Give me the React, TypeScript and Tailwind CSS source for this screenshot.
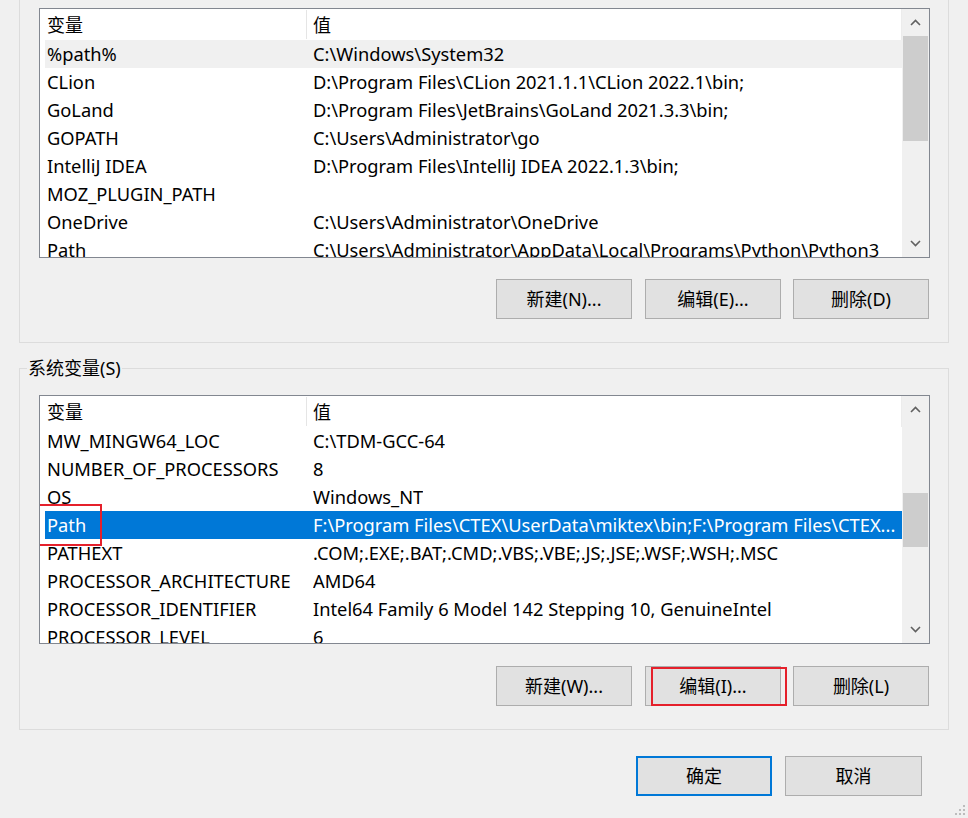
import type { ReactNode } from "react";

type Row = {
  name: string;
  value: string;
  hover?: boolean;
  selected?: boolean;
  mark?: boolean;
};

const userRows: Row[] = [
  { name: "%path%", value: "C:\\Windows\\System32", hover: true },
  { name: "CLion", value: "D:\\Program Files\\CLion 2021.1.1\\CLion 2022.1\\bin;" },
  { name: "GoLand", value: "D:\\Program Files\\JetBrains\\GoLand 2021.3.3\\bin;" },
  { name: "GOPATH", value: "C:\\Users\\Administrator\\go" },
  { name: "IntelliJ IDEA", value: "D:\\Program Files\\IntelliJ IDEA 2022.1.3\\bin;" },
  { name: "MOZ_PLUGIN_PATH", value: "" },
  { name: "OneDrive", value: "C:\\Users\\Administrator\\OneDrive" },
  {
    name: "Path",
    value: "C:\\Users\\Administrator\\AppData\\Local\\Programs\\Python\\Python3",
  },
];

const sysRows: Row[] = [
  { name: "MW_MINGW64_LOC", value: "C:\\TDM-GCC-64" },
  { name: "NUMBER_OF_PROCESSORS", value: "8" },
  { name: "OS", value: "Windows_NT" },
  {
    name: "Path",
    value: "F:\\Program Files\\CTEX\\UserData\\miktex\\bin;F:\\Program Files\\CTEX...",
    selected: true,
    mark: true,
  },
  { name: "PATHEXT", value: ".COM;.EXE;.BAT;.CMD;.VBS;.VBE;.JS;.JSE;.WSF;.WSH;.MSC" },
  { name: "PROCESSOR_ARCHITECTURE", value: "AMD64" },
  {
    name: "PROCESSOR_IDENTIFIER",
    value: "Intel64 Family 6 Model 142 Stepping 10, GenuineIntel",
  },
  { name: "PROCESSOR_LEVEL", value: "6" },
];

function Chevron({ up }: { up?: boolean }) {
  return (
    <svg width="11" height="7" viewBox="0 0 11 7" fill="none">
      <path
        d={up ? "M1 6 L5.5 1.5 L10 6" : "M1 1 L5.5 5.5 L10 1"}
        stroke="#606060"
        strokeWidth="1.6"
      />
    </svg>
  );
}

function VarList({
  rows,
  height,
  thumb,
}: {
  rows: Row[];
  height: string;
  thumb: string;
}) {
  return (
    <div className={`${height} flex overflow-hidden border border-[#828790] bg-white`}>
      <div className="min-w-0 flex-1 overflow-hidden">
        {/* header */}
        <div className="flex h-[31px] items-stretch border-r border-[#ececec]">
          <div className="flex w-[266px] items-center pl-[7px]">变量</div>
          <div className="my-[1px] w-px bg-[#e5e5e5]" />
          <div className="flex items-center pl-[6px]">值</div>
        </div>
        {rows.map((r) => (
          <div
            key={r.name}
            className={`relative ml-[5px] flex h-[28px] items-center pl-[2px] text-[18.3px] whitespace-nowrap ${
              r.selected ? "bg-[#0078d7] text-white" : r.hover ? "bg-[#f0f0f0]" : ""
            }`}
          >
            <div className="w-[266px] shrink-0">{r.name}</div>
            <div className="min-w-0 overflow-hidden">{r.value}</div>
            {r.mark && (
              <span className="absolute left-[-9px] top-[-7px] h-[42px] w-[66px] border-2 border-[#e5202b]" />
            )}
          </div>
        ))}
      </div>
      {/* scrollbar */}
      <div className="flex w-[27px] shrink-0 flex-col bg-[#f0f0f0]">
        <div className="flex h-[27px] shrink-0 items-center justify-center">
          <Chevron up />
        </div>
        <div className="flex-1 px-[1px]">
          <div className={`${thumb} bg-[#cdcdcd]`} />
        </div>
        <div className="flex h-[27px] shrink-0 items-center justify-center">
          <Chevron />
        </div>
      </div>
    </div>
  );
}

function Btn({
  children,
  className = "",
  mark,
}: {
  children: ReactNode;
  className?: string;
  mark?: boolean;
}) {
  return (
    <button
      className={`relative flex h-[40px] items-center justify-center bg-[#e1e1e1] text-black ${
        className || "w-[136px] border border-[#adadad]"
      }`}
    >
      {children}
      {mark && (
        <span className="absolute left-[5px] top-0 h-[39px] w-[136px] border-2 border-[#e5202b]" />
      )}
    </button>
  );
}

export default function App() {
  return (
    <div className="relative h-[818px] w-[968px] overflow-hidden bg-[#f0f0f0] font-['Noto_Sans','Noto_Sans_CJK_SC',sans-serif] text-[18px] leading-[24px] text-black">
      {/* 用户变量 (top cut off) */}
      <div className="ml-[19px] w-[930px] border-x border-b border-[#dcdcdc] pb-[23px] pl-[19px] pr-[18px] pt-[8px]">
        <VarList rows={userRows} height="h-[250px]" thumb="h-[105px]" />
        <div className="mr-[1px] mt-[21px] flex justify-end">
          <Btn>新建(N)...</Btn>
          <div className="w-[13px]" />
          <Btn>编辑(E)...</Btn>
          <div className="w-[12px]" />
          <Btn>删除(D)</Btn>
        </div>
      </div>

      {/* 系统变量 */}
      <fieldset className="ml-[19px] mt-[13px] w-[930px] border border-[#dcdcdc] px-[7px] pb-[23px]">
        <legend className="px-[1px]">系统变量(S)</legend>
        <div className="pl-[12px] pr-[11px] pt-[15px]">
          <VarList rows={sysRows} height="h-[249px]" thumb="mt-[70px] h-[54px]" />
          <div className="mr-[1px] mt-[22px] flex justify-end">
            <Btn>新建(W)...</Btn>
            <div className="w-[13px]" />
            <Btn mark>编辑(I)...</Btn>
            <div className="w-[12px]" />
            <Btn>删除(L)</Btn>
          </div>
        </div>
      </fieldset>

      <div className="mt-[26px] flex justify-end gap-[13px] pr-[46px]">
        <Btn className="w-[136px] border-2 border-[#0078d7]">确定</Btn>
        <Btn className="w-[137px] border border-[#adadad]">取消</Btn>
      </div>

      {/* size grip */}
      <svg
        className="absolute bottom-[2px] right-[2px]"
        width="12"
        height="12"
        viewBox="0 0 12 12"
        fill="#bcbcbc"
      >
        <rect x="9" y="1" width="2" height="2" />
        <rect x="5" y="5" width="2" height="2" />
        <rect x="9" y="5" width="2" height="2" />
        <rect x="1" y="9" width="2" height="2" />
        <rect x="5" y="9" width="2" height="2" />
        <rect x="9" y="9" width="2" height="2" />
      </svg>
    </div>
  );
}
